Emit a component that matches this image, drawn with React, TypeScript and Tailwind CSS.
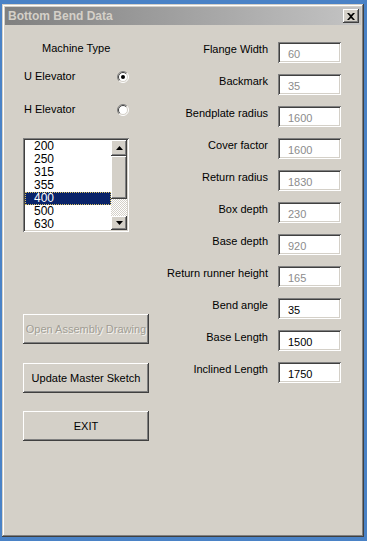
import React from "react";

const raised =
  "shadow-[inset_-1px_-1px_0_#404040,inset_1px_1px_0_#ffffff,inset_-2px_-2px_0_#808080,inset_2px_2px_0_#d4d0c8]";
const sunken =
  "shadow-[inset_1px_1px_0_#808080,inset_-1px_-1px_0_#ffffff,inset_2px_2px_0_#404040,inset_-2px_-2px_0_#d4d0c8]";

function Radio({ checked }: { checked: boolean }) {
  return (
    <svg width="12" height="12" viewBox="0 0 12 12" className="block">
      <circle cx="6" cy="6" r="5" fill="#ffffff" />
      <path d="M2.1 9.9 A5.5 5.5 0 0 1 9.9 2.1" fill="none" stroke="#808080" strokeWidth="1" />
      <path d="M9.9 2.1 A5.5 5.5 0 0 1 2.1 9.9" fill="none" stroke="#ffffff" strokeWidth="1" />
      <path d="M2.8 9.2 A4.5 4.5 0 0 1 9.2 2.8" fill="none" stroke="#404040" strokeWidth="1" />
      <path d="M9.2 2.8 A4.5 4.5 0 0 1 2.8 9.2" fill="none" stroke="#d4d0c8" strokeWidth="1" />
      {checked && <circle cx="6" cy="6" r="2" fill="#000000" />}
    </svg>
  );
}

function Field({ label, value, disabled }: { label: string; value: string; disabled?: boolean }) {
  return (
    <div className="flex items-start h-[21px]">
      <div className="w-[119px] text-right leading-[13px] pt-[1px] text-black whitespace-nowrap">{label}</div>
      <div
        className={`ml-[10px] w-[63px] h-[21px] bg-white pl-[10px] pt-[6px] leading-[13px] ${sunken} ${
          disabled ? "text-[#8c8c8c]" : "text-black"
        }`}
      >
        {value}
      </div>
    </div>
  );
}

function Btn({ children, disabled }: { children: React.ReactNode; disabled?: boolean }) {
  return (
    <div
      className={`w-[126px] h-[30px] flex items-center justify-center bg-[#d4d0c8] whitespace-nowrap ${raised} ${
        disabled ? "text-[#a09d94] [text-shadow:1px_1px_0_#f4f2ee]" : "text-black"
      }`}
    >
      {children}
    </div>
  );
}

export default function App() {
  const items = ["200", "250", "315", "355", "400", "500", "630"];
  const fields: [string, string, boolean][] = [
    ["Flange Width", "60", true],
    ["Backmark", "35", true],
    ["Bendplate radius", "1600", true],
    ["Cover factor", "1600", true],
    ["Return radius", "1830", true],
    ["Box depth", "230", true],
    ["Base depth", "920", true],
    ["Return runner height", "165", true],
    ["Bend angle", "35", false],
    ["Base Length", "1500", false],
    ["Inclined Length", "1750", false],
  ];
  return (
    <div
      className="w-[367px] h-[541px] bg-[#4a82c6] pl-[2px] pt-[4px] overflow-hidden text-[11px]"
      style={{ fontFamily: '"Liberation Sans", Arial, sans-serif' }}
    >
      <div
        className={`w-[362px] h-[533px] bg-[#d4d0c8] p-[3px] flex flex-col shadow-[inset_-1px_-1px_0_#404040,inset_1px_1px_0_#d4d0c8,inset_-2px_-2px_0_#808080,inset_2px_2px_0_#ffffff]`}
      >
        {/* Title bar */}
        <div className="h-[18px] bg-gradient-to-r from-[#808080] to-[#c4c4c4] flex items-center justify-between pl-[3px] pr-[2px]">
          <span className="font-bold text-[#d4d0c8] text-[12px] leading-[14px]">Bottom Bend Data</span>
          <div className={`w-[16px] h-[14px] bg-[#d4d0c8] flex items-center justify-center ${raised}`}>
            <svg width="8" height="7" viewBox="0 0 8 7" className="block">
              <path d="M0 0 L2 0 L4 2 L6 0 L8 0 L5 3.5 L8 7 L6 7 L4 5 L2 7 L0 7 L3 3.5 Z" fill="#000000" />
            </svg>
          </div>
        </div>

        {/* Body */}
        <div className="flex flex-row pl-[18px] pt-[17px]">
          {/* Left column */}
          <div className="w-[126px] flex flex-col">
            <div className="ml-[19px] leading-[13px] h-[13px]">Machine Type</div>
            <div className="mt-[15px] h-[13px] flex items-center">
              <span className="ml-[1px] leading-[13px] w-[93px]">U Elevator</span>
              <Radio checked={true} />
            </div>
            <div className="mt-[20px] h-[13px] flex items-center">
              <span className="ml-[1px] leading-[13px] w-[93px]">H Elevator</span>
              <Radio checked={false} />
            </div>
            <div className={`mt-[22px] w-[106px] h-[94px] bg-white p-[2px] flex ${sunken}`}>
              <div className="flex-1 flex flex-col overflow-hidden">
                {items.map((it) => (
                  <div
                    key={it}
                    className={`h-[13px] shrink-0 leading-[13px] pl-[9px] text-[12px] ${
                      it === "400"
                        ? "bg-[#0a246a] text-white outline outline-1 outline-dotted outline-[#d8c060] -outline-offset-1"
                        : "text-black"
                    }`}
                  >
                    {it}
                  </div>
                ))}
              </div>
              <div className="w-[16px] flex flex-col">
                <div className={`h-[16px] bg-[#d4d0c8] flex items-center justify-center ${raised}`}>
                  <svg width="7" height="4" viewBox="0 0 7 4" className="block">
                    <path d="M3.5 0 L7 4 L0 4 Z" fill="#000" />
                  </svg>
                </div>
                <div className={`h-[43px] bg-[#d4d0c8] ${raised}`} />
                <div className="h-[17px] bg-[repeating-conic-gradient(#ffffff_0%_25%,#d4d0c8_0%_50%)] bg-size-[2px_2px]" />
                <div className={`h-[14px] bg-[#d4d0c8] flex items-center justify-center ${raised}`}>
                  <svg width="7" height="4" viewBox="0 0 7 4" className="block">
                    <path d="M0 0 L7 0 L3.5 4 Z" fill="#000" />
                  </svg>
                </div>
              </div>
            </div>
            <div className="mt-[82px]">
              <Btn disabled>Open Assembly Drawing</Btn>
            </div>
            <div className="mt-[19px]">
              <Btn>Update Master Sketch</Btn>
            </div>
            <div className="mt-[18px]">
              <Btn>EXIT</Btn>
            </div>
          </div>

          {/* Right column */}
          <div className="flex flex-col gap-[11px]">
            {fields.map(([l, v, d]) => (
              <Field key={l} label={l} value={v} disabled={d} />
            ))}
          </div>
        </div>
      </div>
    </div>
  );
}
